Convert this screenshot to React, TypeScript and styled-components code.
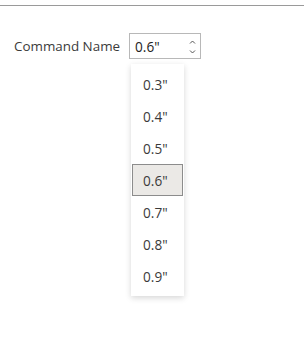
import React from 'react';
import styled, { createGlobalStyle } from 'styled-components';

const sizes = ['0.3"', '0.4"', '0.5"', '0.6"', '0.7"', '0.8"', '0.9"'];
const current = '0.6"';

const GlobalStyle = createGlobalStyle`
    body {
        margin: 0;
        background: #ffffff;
        font-family: 'Open Sans', 'Noto Sans', sans-serif;
        color: #333333;
    }
`;

const Page = styled.div`
    width: 304px;
    height: 345px;
    padding-top: 5px;
    box-sizing: border-box;
`;

const Rule = styled.div`
    height: 1px;
    background: #9a9a9a;
`;

const Field = styled.div`
    display: flex;
    align-items: center;
    gap: 9px;
    margin-top: 27px;
    padding-left: 14px;
`;

const Label = styled.span`
    font-size: 13.4px;
    color: #3b3b3b;
`;

const Picker = styled.div`
    position: relative;
`;

const Input = styled.div`
    display: flex;
    align-items: center;
    justify-content: space-between;
    box-sizing: border-box;
    width: 72px;
    height: 26px;
    padding: 0 4px 0 5px;
    border: 1px solid #b8b8b8;
    font-size: 13.6px;
    color: #222222;
`;

const Spinner = styled.div`
    display: flex;
    flex-direction: column;
    gap: 6px;
    margin-top: 1px;
`;

const Menu = styled.ul`
    position: absolute;
    top: 31px;
    left: 2px;
    width: 53px;
    margin: 0;
    padding: 4px 0;
    list-style: none;
    background: #ffffff;
    box-shadow: 0 2px 6px rgba(0, 0, 0, 0.16);
`;

const Item = styled.li<{ $selected?: boolean }>`
    box-sizing: border-box;
    height: 32px;
    margin: 0 1px;
    padding-left: 10px;
    display: flex;
    align-items: center;
    font-size: 13.6px;
    color: #3a3a3a;
    background: ${(p) => (p.$selected ? '#ebe9e6' : 'transparent')};
    border: 1px solid ${(p) => (p.$selected ? '#8c8c8c' : 'transparent')};
`;

const Chevron: React.FC<{ up?: boolean }> = ({ up }) => (
    <svg width="7" height="4" viewBox="0 0 7 4">
        <path
            d={up ? 'M1 3.5 L3.5 1 L6 3.5' : 'M1 0.5 L3.5 3 L6 0.5'}
            fill="none"
            stroke="#444"
            strokeWidth="0.9"
        />
    </svg>
);

const App: React.FC = () => (
    <Page>
        <GlobalStyle />
        <Rule />
        <Field>
            <Label>Command Name</Label>
            <Picker>
                <Input>
                    <span>{current}</span>
                    <Spinner>
                        <Chevron up />
                        <Chevron />
                    </Spinner>
                </Input>
                <Menu>
                    {sizes.map((s) => (
                        <Item key={s} $selected={s === current}>
                            {s}
                        </Item>
                    ))}
                </Menu>
            </Picker>
        </Field>
    </Page>
);

export default App;
